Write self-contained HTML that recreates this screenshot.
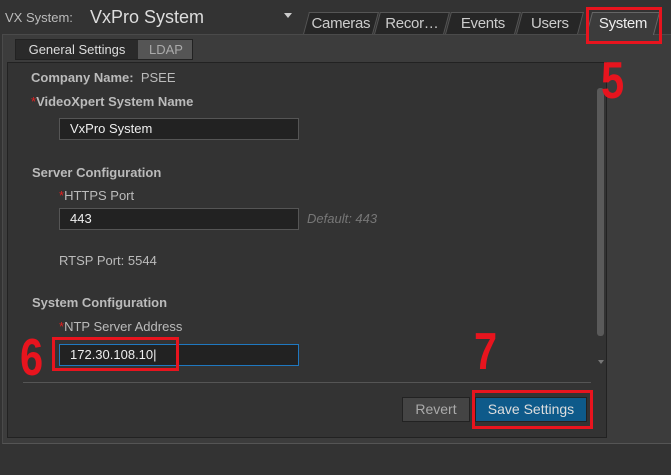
<!DOCTYPE html>
<html><head><style>
*{margin:0;padding:0;box-sizing:border-box}
body{width:671px;height:475px;background:#333;font-family:"Liberation Sans",sans-serif;position:relative;overflow:hidden;color:#ccc}
.a{position:absolute}
.outer{left:2px;top:34px;width:669px;height:410px;background:#3c3c3c;border-top:1px solid #4a4a4a;border-left:1px solid #4a4a4a;border-bottom:1px solid #555}
.inner{left:7px;top:62px;width:600px;height:376px;background:#333;border:1px solid #222}
.tab{top:12px;height:22px;font-size:15px;color:#ccc;background:#262626;transform:skewX(-15deg);border:1px solid #555;border-bottom:none}
.tab span{display:block;transform:skewX(15deg);text-align:center;line-height:21px;letter-spacing:-0.3px}
.lbl{font-size:13px}
.b{font-weight:bold;color:#bbb}
.inp{background:#222;border:1px solid #555;height:22px;font-size:13px;color:#eee;padding-left:10px;line-height:20px}
.red{color:#e02020}
.box{border:3px solid #e8141e}
.num{color:#e8141e;font-weight:bold;font-size:52px;font-family:"Liberation Sans",sans-serif;transform:scaleX(0.8);transform-origin:left top;line-height:1}
</style></head><body>
<div class="a" style="left:5px;top:10px;font-size:13px;color:#bbb">VX System:</div>
<div class="a" style="left:90px;top:7px;font-size:18px;color:#ddd">VxPro System</div>
<div class="a" style="left:284px;top:13px;width:0;height:0;border-left:4px solid transparent;border-right:4px solid transparent;border-top:5px solid #ccc"></div>
<div class="a tab" style="left:306px;width:70px"><span>Cameras</span></div>
<div class="a tab" style="left:377px;width:70px"><span>Recor…</span></div>
<div class="a tab" style="left:448px;width:70px"><span>Events</span></div>
<div class="a tab" style="left:519px;width:62px"><span>Users</span></div>
<div class="a outer"></div>
<div class="a tab" style="left:589px;top:12px;width:68px;height:23px;background:#3c3c3c;color:#eee;border-color:#666"><span>System</span></div>
<div class="a box" style="left:586px;top:7px;width:76px;height:37px"></div>
<div class="a" style="left:15px;top:39px;width:178px;height:21px;background:#555;border:1px solid #222"></div>
<div class="a" style="left:16px;top:40px;width:122px;height:19px;background:#2a2a2a;font-size:13px;color:#ddd;text-align:center;line-height:19px">General Settings</div>
<div class="a" style="left:140px;top:40px;width:52px;height:19px;font-size:13px;color:#aaa;text-align:center;line-height:19px">LDAP</div>
<div class="a inner"></div>
<div class="a" style="left:597px;top:88px;width:7px;height:248px;background:#5a5a5a;border-radius:3px"></div>
<div class="a" style="left:598px;top:360px;width:0;height:0;border-left:3px solid transparent;border-right:3px solid transparent;border-top:4px solid #777"></div>
<div class="a lbl" style="left:31px;top:70px"><span class="b">Company Name:</span>&nbsp; <span style="color:#bbb">PSEE</span></div>
<div class="a lbl b" style="left:31px;top:94px"><span class="red" style="font-weight:normal">*</span>VideoXpert System Name</div>
<div class="a inp" style="left:59px;top:118px;width:240px">VxPro System</div>
<div class="a lbl b" style="left:32px;top:165px">Server Configuration</div>
<div class="a lbl" style="left:59px;top:188px;color:#bbb"><span class="red">*</span>HTTPS Port</div>
<div class="a inp" style="left:59px;top:208px;width:240px">443</div>
<div class="a lbl" style="left:307px;top:211px;color:#777;font-style:italic">Default: 443</div>
<div class="a lbl" style="left:59px;top:253px;color:#bbb">RTSP Port: 5544</div>
<div class="a lbl b" style="left:32px;top:295px">System Configuration</div>
<div class="a lbl" style="left:59px;top:319px;color:#bbb"><span class="red">*</span>NTP Server Address</div>
<div class="a inp" style="left:59px;top:344px;width:240px;border-color:#1f78c0">172.30.108.10|</div>
<div class="a box" style="left:52px;top:337px;width:127px;height:34px"></div>
<div class="a num" style="left:20px;top:332px">6</div>
<div class="a num" style="left:474px;top:326px">7</div>
<div class="a num" style="left:601px;top:55px">5</div>
<div class="a" style="left:23px;top:382px;width:568px;height:1px;background:#555"></div>
<div class="a" style="left:402px;top:397px;width:68px;height:25px;background:#444;border:1px solid #222;font-size:14px;color:#aaa;text-align:center;line-height:23px">Revert</div>
<div class="a" style="left:475px;top:397px;width:112px;height:25px;background:#0e5a8a;border:1px solid #222;font-size:14px;color:#ddd;text-align:center;line-height:23px">Save Settings</div>
<div class="a box" style="left:472px;top:390px;width:121px;height:39px"></div>
</body></html>
